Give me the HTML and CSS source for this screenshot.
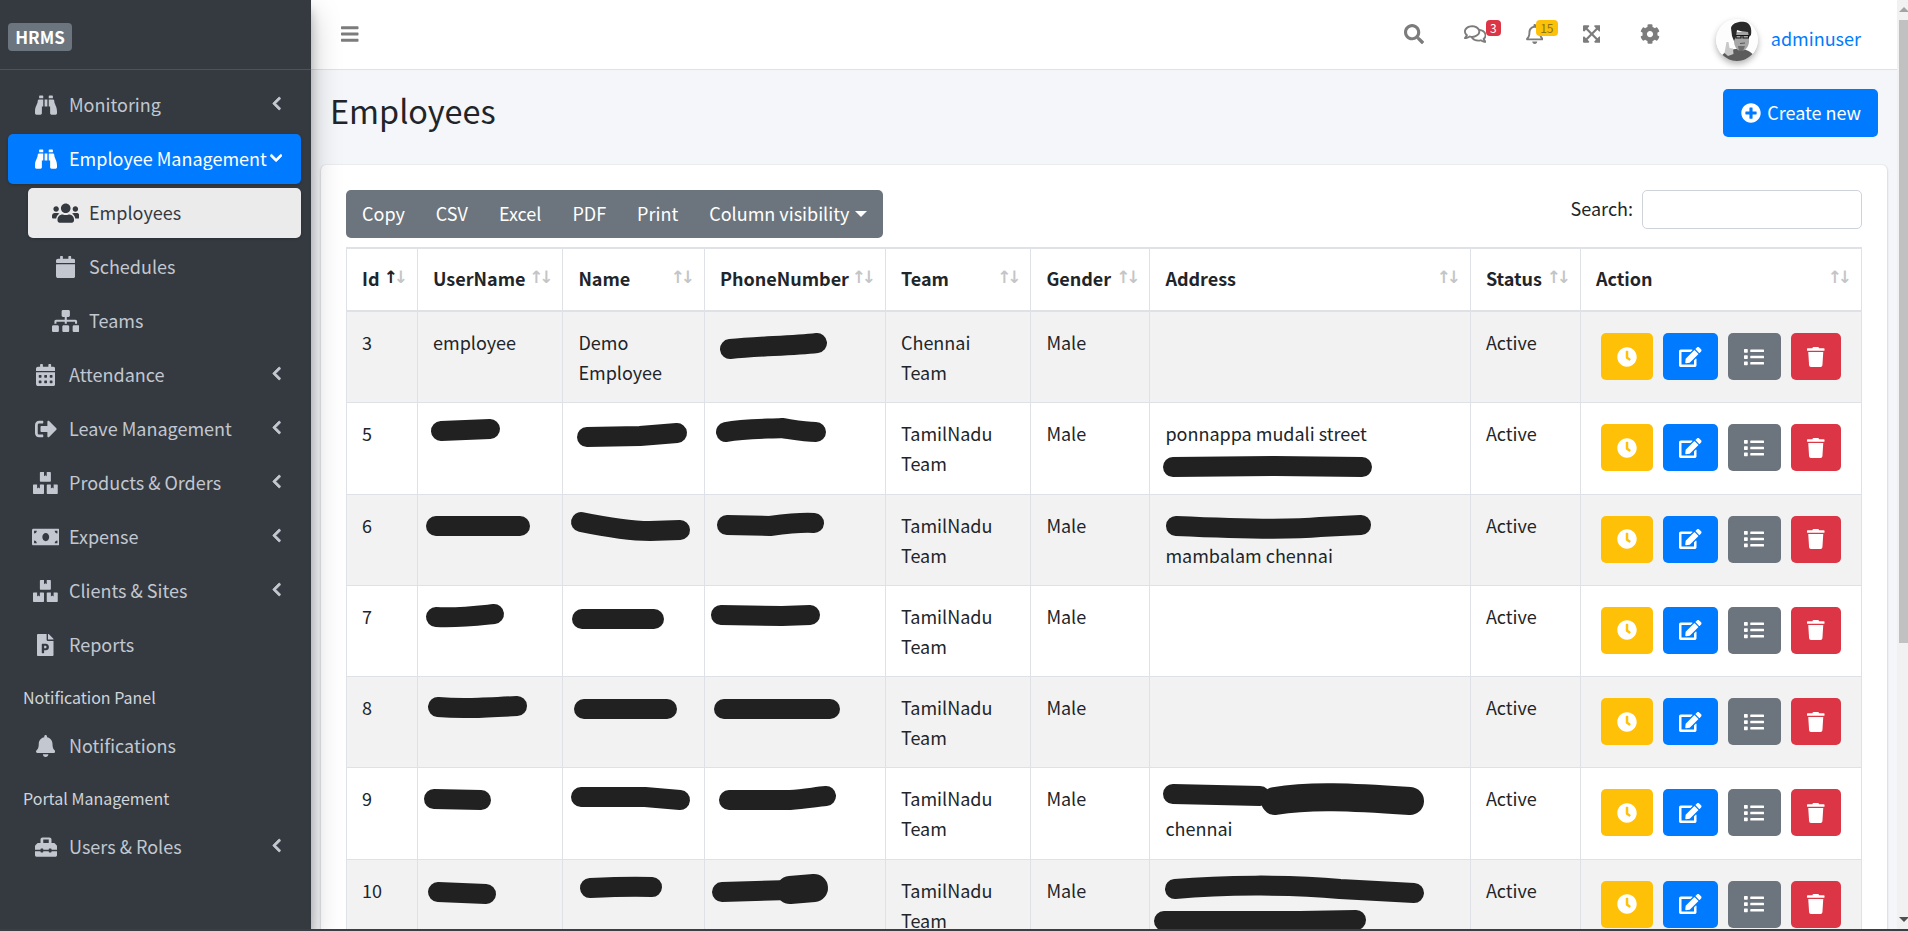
FILE: index.html
```
<!DOCTYPE html>
<html lang="en">
<head>
<meta charset="utf-8">
<title>Employees</title>
<link rel="stylesheet" href="styles.css">
</head>
<body>
<svg class="sprite" aria-hidden="true"><defs>
<path id="i-bars" d="M16 132h416c8.837 0 16-7.163 16-16V76c0-8.837-7.163-16-16-16H16C7.163 60 0 67.163 0 76v40c0 8.837 7.163 16 16 16zm0 160h416c8.837 0 16-7.163 16-16v-40c0-8.837-7.163-16-16-16H16c-8.837 0-16 7.163-16 16v40c0 8.837 7.163 16 16 16zm0 160h416c8.837 0 16-7.163 16-16v-40c0-8.837-7.163-16-16-16H16c-8.837 0-16 7.163-16 16v40c0 8.837 7.163 16 16 16z"/>
<path id="i-search" d="M505 442.7L405.3 343c-4.5-4.5-10.6-7-17-7H372c27.6-35.3 44-79.7 44-128C416 93.1 322.9 0 208 0S0 93.1 0 208s93.1 208 208 208c48.3 0 92.7-16.4 128-44v16.3c0 6.4 2.5 12.5 7 17l99.7 99.7c9.4 9.4 24.6 9.4 33.9 0l28.3-28.3c9.4-9.4 9.4-24.6.1-34zM208 336c-70.7 0-128-57.2-128-128 0-70.7 57.2-128 128-128 70.7 0 128 57.2 128 128 0 70.7-57.2 128-128 128z"/>
<path id="i-cog" d="M487.4 315.7l-42.6-24.6c4.3-23.2 4.3-47 0-70.2l42.6-24.6c4.9-2.8 7.1-8.6 5.5-14-11.1-35.6-30-67.8-54.7-94.6-3.8-4.1-10-5.1-14.8-2.3L380.8 110c-17.9-15.4-38.5-27.3-60.8-35.1V25.8c0-5.6-3.9-10.5-9.4-11.7-36.7-8.2-74.3-7.8-109.2 0-5.5 1.2-9.4 6.1-9.4 11.7V75c-22.2 7.9-42.8 19.8-60.8 35.1L88.7 85.5c-4.9-2.8-11-1.9-14.8 2.3-24.7 26.7-43.6 58.9-54.7 94.6-1.7 5.4.6 11.2 5.5 14L67.3 221c-4.3 23.2-4.3 47 0 70.2l-42.6 24.6c-4.9 2.8-7.1 8.6-5.5 14 11.1 35.6 30 67.8 54.7 94.6 3.8 4.1 10 5.1 14.8 2.3l42.6-24.6c17.9 15.4 38.5 27.3 60.8 35.1v49.2c0 5.6 3.9 10.5 9.4 11.7 36.7 8.2 74.3 7.8 109.2 0 5.5-1.2 9.4-6.1 9.4-11.7v-49.2c22.2-7.9 42.8-19.8 60.8-35.1l42.6 24.6c4.9 2.8 11 1.9 14.8-2.3 24.7-26.7 43.6-58.9 54.7-94.6 1.5-5.5-.7-11.3-5.6-14.1zM256 336c-44.1 0-80-35.9-80-80s35.9-80 80-80 80 35.9 80 80-35.9 80-80 80z"/>
<path id="i-left" d="M34.52 239.03L228.87 44.69c9.37-9.37 24.57-9.37 33.94 0l22.67 22.67c9.36 9.36 9.37 24.52.04 33.9L131.49 256l154.02 154.75c9.34 9.38 9.32 24.54-.04 33.9l-22.67 22.67c-9.37 9.37-24.57 9.37-33.94 0L34.52 272.97c-9.37-9.37-9.37-24.57 0-33.94z"/>
<path id="i-down" d="M207.029 381.476L12.686 187.132c-9.373-9.373-9.373-24.569 0-33.941l22.667-22.667c9.357-9.357 24.522-9.375 33.901-.04L224 284.505l154.745-154.021c9.379-9.335 24.544-9.317 33.901.04l22.667 22.667c9.373 9.373 9.373 24.569 0 33.941L240.971 381.476c-9.373 9.372-24.569 9.372-33.942 0z"/>
<path id="i-trash" d="M432 32H312l-9.4-18.7A24 24 0 0 0 281.1 0H166.8a23.72 23.72 0 0 0-21.4 13.3L136 32H16A16 16 0 0 0 0 48v32a16 16 0 0 0 16 16h416a16 16 0 0 0 16-16V48a16 16 0 0 0-16-16zM53.2 467a48 48 0 0 0 47.9 45h245.8a48 48 0 0 0 47.9-45L416 128H32z"/>
<path id="i-clock" d="M256,8C119,8,8,119,8,256S119,504,256,504,504,393,504,256,393,8,256,8Zm92.49,313h0l-20,25a16,16,0,0,1-22.49,2.5h0l-67-49.72a40,40,0,0,1-15-31.23V112a16,16,0,0,1,16-16h32a16,16,0,0,1,16,16V256l58,42.5A16,16,0,0,1,348.49,321Z"/>
<path id="i-edit" d="M402.6 83.2l90.2 90.2c3.8 3.8 3.8 10 0 13.8L274.4 405.6l-92.8 10.3c-12.4 1.4-22.9-9.1-21.5-21.5l10.3-92.8L388.8 83.2c3.8-3.8 10-3.8 13.8 0zm162-22.9l-48.8-48.8c-15.2-15.2-39.9-15.2-55.2 0l-35.4 35.4c-3.8 3.8-3.8 10 0 13.8l90.2 90.2c3.8 3.8 10 3.8 13.8 0l35.4-35.4c15.2-15.3 15.2-40 0-55.2zM384 346.2V448H64V128h229.8c3.2 0 6.2-1.3 8.5-3.5l40-40c7.6-7.6 2.2-20.5-8.5-20.5H48C21.5 64 0 85.5 0 112v352c0 26.5 21.5 48 48 48h352c26.5 0 48-21.5 48-48V306.2c0-10.7-12.9-16-20.5-8.5l-40 40c-2.2 2.3-3.5 5.3-3.5 8.5z"/>
<path id="i-list" d="M80 368H16a16 16 0 0 0-16 16v64a16 16 0 0 0 16 16h64a16 16 0 0 0 16-16v-64a16 16 0 0 0-16-16zm0-320H16A16 16 0 0 0 0 64v64a16 16 0 0 0 16 16h64a16 16 0 0 0 16-16V64a16 16 0 0 0-16-16zm0 160H16a16 16 0 0 0-16 16v64a16 16 0 0 0 16 16h64a16 16 0 0 0 16-16v-64a16 16 0 0 0-16-16zm416 176H176a16 16 0 0 0-16 16v32a16 16 0 0 0 16 16h320a16 16 0 0 0 16-16v-32a16 16 0 0 0-16-16zm0-320H176a16 16 0 0 0-16 16v32a16 16 0 0 0 16 16h320a16 16 0 0 0 16-16V80a16 16 0 0 0-16-16zm0 160H176a16 16 0 0 0-16 16v32a16 16 0 0 0 16 16h320a16 16 0 0 0 16-16v-32a16 16 0 0 0-16-16z"/>
<path id="i-plus" d="M256 8C119 8 8 119 8 256s111 248 248 248 248-111 248-248S393 8 256 8zm144 276c0 6.6-5.4 12-12 12h-92v92c0 6.6-5.4 12-12 12h-56c-6.6 0-12-5.4-12-12v-92h-92c-6.6 0-12-5.4-12-12v-56c0-6.6 5.4-12 12-12h92v-92c0-6.6 5.4-12 12-12h56c6.6 0 12 5.4 12 12v92h92c6.6 0 12 5.4 12 12v56z"/>
<path id="i-bell" d="M224 512c35.32 0 63.97-28.65 63.97-64H160.03c0 35.35 28.65 64 63.97 64zm215.39-149.71c-19.32-20.76-55.47-51.99-55.47-154.29 0-77.7-54.48-139.9-127.94-155.16V32c0-17.67-14.32-32-31.98-32s-31.98 14.33-31.98 32v20.84C118.56 68.1 64.08 130.3 64.08 208c0 102.3-36.15 133.53-55.47 154.29-6 6.45-8.66 14.16-8.61 21.71.11 16.4 12.98 32 32.1 32h383.8c19.12 0 32-15.6 32.1-32 .05-7.55-2.61-15.27-8.61-21.71z"/>
<path id="i-bell-o" d="M439.39 362.29c-19.32-20.76-55.47-51.99-55.47-154.29 0-77.7-54.48-139.9-127.94-155.16V32c0-17.67-14.32-32-31.98-32s-31.98 14.33-31.98 32v20.84C118.56 68.1 64.08 130.3 64.08 208c0 102.3-36.15 133.53-55.47 154.29-6 6.45-8.66 14.16-8.61 21.71.11 16.4 12.98 32 32.1 32h383.8c19.12 0 32-15.6 32.1-32 .05-7.55-2.61-15.27-8.61-21.71zM67.53 368c21.22-27.97 44.42-74.33 44.53-159.42 0-.2-.06-.38-.06-.58 0-61.86 50.14-112 112-112s112 50.14 112 112c0 .2-.06.38-.06.58.11 85.1 23.31 131.46 44.53 159.42H67.53zM224 512c35.32 0 63.97-28.65 63.97-64H160.03c0 35.35 28.65 64 63.97 64z"/>
<path id="i-users" d="M96 224c35.3 0 64-28.7 64-64s-28.7-64-64-64-64 28.7-64 64 28.7 64 64 64zm448 0c35.3 0 64-28.7 64-64s-28.7-64-64-64-64 28.7-64 64 28.7 64 64 64zm32 32h-64c-17.6 0-33.5 7.1-45.1 18.6 40.3 22.1 68.9 62 75.1 109.4h66c17.7 0 32-14.3 32-32v-32c0-35.3-28.7-64-64-64zm-256 0c61.9 0 112-50.1 112-112S381.9 32 320 32 208 82.1 208 144s50.1 112 112 112zm76.8 32h-8.3c-20.8 10-43.9 16-68.5 16s-47.6-6-68.5-16h-8.3C179.6 288 128 339.6 128 403.2V432c0 26.5 21.5 48 48 48h288c26.5 0 48-21.5 48-48v-28.8c0-63.6-51.6-115.2-115.2-115.2zm-223.7-13.4C161.5 263.1 145.6 256 128 256H64c-35.3 0-64 28.7-64 64v32c0 17.7 14.3 32 32 32h65.9c6.3-47.4 34.9-87.3 75.2-109.4z"/>
<path id="i-calendar" d="M12 192h424c6.6 0 12 5.4 12 12v260c0 26.5-21.5 48-48 48H48c-26.5 0-48-21.5-48-48V204c0-6.6 5.4-12 12-12zm436-44v-36c0-26.5-21.5-48-48-48h-48V12c0-6.6-5.4-12-12-12h-40c-6.6 0-12 5.4-12 12v52H160V12c0-6.6-5.4-12-12-12h-40c-6.6 0-12 5.4-12 12v52H48C21.5 64 0 85.5 0 112v36c0 6.6 5.4 12 12 12h424c6.6 0 12-5.4 12-12z"/>
<path id="i-calendar-alt" d="M0 464c0 26.5 21.5 48 48 48h352c26.5 0 48-21.5 48-48V192H0v272zm320-196c0-6.6 5.4-12 12-12h40c6.6 0 12 5.4 12 12v40c0 6.6-5.4 12-12 12h-40c-6.6 0-12-5.4-12-12v-40zm0 128c0-6.6 5.4-12 12-12h40c6.6 0 12 5.4 12 12v40c0 6.6-5.4 12-12 12h-40c-6.6 0-12-5.4-12-12v-40zM192 268c0-6.6 5.4-12 12-12h40c6.6 0 12 5.4 12 12v40c0 6.6-5.4 12-12 12h-40c-6.6 0-12-5.4-12-12v-40zm0 128c0-6.6 5.4-12 12-12h40c6.6 0 12 5.4 12 12v40c0 6.6-5.4 12-12 12h-40c-6.6 0-12-5.4-12-12v-40zM64 268c0-6.6 5.4-12 12-12h40c6.6 0 12 5.4 12 12v40c0 6.6-5.4 12-12 12H76c-6.6 0-12-5.4-12-12v-40zm0 128c0-6.6 5.4-12 12-12h40c6.6 0 12 5.4 12 12v40c0 6.6-5.4 12-12 12H76c-6.6 0-12-5.4-12-12v-40zM400 64h-48V16c0-8.8-7.2-16-16-16h-32c-8.8 0-16 7.2-16 16v48H160V16c0-8.8-7.2-16-16-16h-32c-8.8 0-16 7.2-16 16v48H48C21.5 64 0 85.5 0 112v48h448v-48c0-26.5-21.5-48-48-48z"/>
<path id="i-sitemap" d="M128 352H32c-17.67 0-32 14.33-32 32v96c0 17.67 14.33 32 32 32h96c17.67 0 32-14.33 32-32v-96c0-17.67-14.33-32-32-32zm240 0h-96c-17.67 0-32 14.33-32 32v96c0 17.67 14.33 32 32 32h96c17.67 0 32-14.33 32-32v-96c0-17.67-14.33-32-32-32zm240 0h-96c-17.67 0-32 14.33-32 32v96c0 17.67 14.33 32 32 32h96c17.67 0 32-14.33 32-32v-96c0-17.67-14.33-32-32-32zM104 272h192v48h48v-48h192v48h48v-57.6c0-21.18-17.22-38.4-38.4-38.4H344v-64h40c17.67 0 32-14.33 32-32V32c0-17.67-14.33-32-32-32H256c-17.67 0-32 14.33-32 32v96c0 17.67 14.33 32 32 32h40v64H94.4C73.22 224 56 241.22 56 262.4V320h48v-48z"/>
<path id="i-binoculars" d="M416 48c0-8.84-7.16-16-16-16h-64c-8.84 0-16 7.16-16 16v48h96V48zM63.91 159.99C61.4 253.84 3.46 274.22 0 404v44c0 17.67 14.33 32 32 32h96c17.67 0 32-14.33 32-32V288h32V128H95.84c-17.63 0-31.45 14.37-31.93 31.99zm384.18 0c-.48-17.62-14.3-31.99-31.93-31.99H320v160h32v160c0 17.67 14.33 32 32 32h96c17.67 0 32-14.33 32-32v-44c-3.46-129.78-61.4-150.16-63.91-244.01zM176 32h-64c-8.84 0-16 7.16-16 16v48h96V48c0-8.84-7.16-16-16-16zm48 256h64V128h-64v160z"/>
<path id="i-signout" d="M497 273L329 441c-15 15-41 4.5-41-17v-96H152c-13.3 0-24-10.7-24-24v-96c0-13.3 10.7-24 24-24h136V88c0-21.4 25.9-32 41-17l168 168c9.3 9.4 9.3 24.6 0 34zM192 436v-40c0-6.6-5.4-12-12-12H96c-17.7 0-32-14.3-32-32V160c0-17.7 14.3-32 32-32h84c6.6 0 12-5.4 12-12V76c0-6.6-5.4-12-12-12H96c-53 0-96 43-96 96v192c0 53 43 96 96 96h84c6.6 0 12-5.4 12-12z"/>
<path id="i-boxes" d="M560 288h-80v96l-32-21.3-32 21.3v-96h-80c-8.8 0-16 7.2-16 16v192c0 8.8 7.2 16 16 16h224c8.8 0 16-7.2 16-16V304c0-8.8-7.2-16-16-16zm-384-64h224c8.8 0 16-7.2 16-16V16c0-8.8-7.2-16-16-16h-80v96l-32-21.3L256 96V0h-80c-8.8 0-16 7.2-16 16v192c0 8.8 7.2 16 16 16zm64 64h-80v96l-32-21.3L96 384v-96H16c-8.8 0-16 7.2-16 16v192c0 8.8 7.2 16 16 16h224c8.8 0 16-7.2 16-16V304c0-8.8-7.2-16-16-16z"/>
<path id="i-money" d="M608 64H32C14.33 64 0 78.33 0 96v320c0 17.67 14.33 32 32 32h576c17.67 0 32-14.33 32-32V96c0-17.67-14.33-32-32-32zM48 400v-64c35.35 0 64 28.65 64 64H48zm0-224v-64h64c0 35.35-28.65 64-64 64zm272 176c-44.19 0-80-42.99-80-96 0-53.02 35.82-96 80-96s80 42.98 80 96c0 53.03-35.83 96-80 96zm272 48h-64c0-35.35 28.65-64 64-64v64zm0-224c-35.35 0-64-28.65-64-64h64v64z"/>
<path id="i-filep" d="M193.7 271.2c8.8 0 15.5 2.7 20.3 8.1 9.6 10.9 9.8 32.7-.2 44.1-4.9 5.6-11.9 8.5-21.1 8.5h-26.9v-60.7h27.9zM377 105L279 7c-4.5-4.5-10.6-7-17-7h-6v128h128v-6.1c0-6.3-2.5-12.4-7-16.9zm-153 31V0H24C10.7 0 0 10.7 0 24v464c0 13.3 10.7 24 24 24h336c13.3 0 24-10.7 24-24V160H248c-13.2 0-24-10.8-24-24zm53 165.2c0 90.3-88.8 77.6-111.1 77.6V436c0 6.6-5.4 12-12 12h-30.8c-6.6 0-12-5.4-12-12V236.2c0-6.6 5.4-12 12-12h81c44.5 0 72.9 32.8 72.9 77z"/>
<path id="i-toolbox" d="M502.63 214.63l-45.25-45.25c-6-6-14.14-9.37-22.63-9.37H384V80c0-26.51-21.49-48-48-48H176c-26.51 0-48 21.49-48 48v80H77.25c-8.49 0-16.62 3.37-22.63 9.37L9.37 214.63c-6 6-9.37 14.14-9.37 22.63V320h128v-16c0-8.84 7.16-16 16-16h32c8.84 0 16 7.16 16 16v16h128v-16c0-8.84 7.16-16 16-16h32c8.84 0 16 7.16 16 16v16h128v-82.75c0-8.48-3.37-16.62-9.37-22.62zM320 160H192V80h128v80zm64 208c0 8.84-7.16 16-16 16h-32c-8.84 0-16-7.16-16-16v-16H192v16c0 8.84-7.16 16-16 16h-32c-8.84 0-16-7.16-16-16v-16H0v96c0 17.67 14.33 32 32 32h448c17.67 0 32-14.33 32-32v-96H384v16z"/>
<path id="i-expand" d="M448 344v112a23.94 23.94 0 0 1-24 24H312c-21.39 0-32.09-25.9-17-41l36.2-36.2L224 295.6 116.77 402.9 153 439c15.09 15.1 4.39 41-17 41H24a23.94 23.94 0 0 1-24-24V344c0-21.4 25.89-32.1 41-17l36.19 36.2L184.46 256 77.18 148.7 41 185c-15.1 15.1-41 4.4-41-17V56a23.94 23.94 0 0 1 24-24h112c21.39 0 32.09 25.9 17 41l-36.2 36.2L224 216.4l107.23-107.3L295 73c-15.09-15.1-4.39-41 17-41h112a23.94 23.94 0 0 1 24 24v112c0 21.4-25.89 32.1-41 17l-36.19-36.2L263.54 256l107.28 107.3L407 327.1c15.1-15.2 41-4.5 41 16.9z"/>
<path id="i-comments" d="M532 386.2c27.5-27.1 44-61.1 44-98.2 0-80-76.5-146.1-176.2-157.9C368.3 72.5 294.3 32 208 32 93.1 32 0 103.6 0 192c0 37 16.5 71 44 98.2-15.3 30.7-37.3 54.5-37.7 54.9-6.3 6.7-8.1 16.5-4.4 25 3.6 8.5 12 14 21.2 14 53.5 0 96.7-20.2 125.2-38.8 9.2 2.1 18.7 3.7 28.4 4.9C208.1 407.6 281.8 448 368 448c20.8 0 40.8-2.4 59.8-6.8C456.3 459.7 499.4 480 553 480c9.2 0 17.5-5.5 21.2-14 3.6-8.5 1.9-18.3-4.4-25-.4-.3-22.5-24.1-37.8-54.8zm-392.8-92.3L122.1 305c-14.1 9.1-28.5 16.3-43.1 21.4 2.7-4.7 5.4-9.7 8-14.8l15.5-31.1L77.7 256C64.2 242.6 48 220.7 48 192c0-60.7 73.3-112 160-112s160 51.3 160 112-73.3 112-160 112c-16.5 0-33-1.9-49-5.6l-19.8-4.5zM498.3 352l-24.7 24.4 15.5 31.1c2.6 5.1 5.3 10.1 8 14.8-14.6-5.1-29-12.3-43.1-21.4l-17.1-11.1-19.9 4.6c-16 3.7-32.5 5.6-49 5.6-54 0-102.2-20.1-131.3-49.7C338 339.5 416 272.9 416 192c0-3.4-.4-6.7-.7-10C479.7 196.5 528 238.8 528 288c0 28.7-16.2 50.6-29.7 64z"/>
</defs></svg>

<div class="app">
  <aside class="sidebar">
    <div class="brand"><span class="brand-badge">HRMS</span></div>
    <nav class="nav">
      <a class="nav-link"><span class="nav-ic"><svg class="ic" viewBox="0 0 512 512"><use href="#i-binoculars"/></svg></span><span>Monitoring</span><svg class="chev" viewBox="0 0 320 512"><use href="#i-left"/></svg></a>
      <a class="nav-link active"><span class="nav-ic"><svg class="ic" viewBox="0 0 512 512"><use href="#i-binoculars"/></svg></span><span>Employee Management</span><svg class="chev-down" viewBox="0 0 448 512"><use href="#i-down"/></svg></a>
      <a class="nav-link sub current"><span class="nav-ic"><svg class="ic" viewBox="0 0 640 512"><use href="#i-users"/></svg></span><span>Employees</span></a>
      <a class="nav-link sub"><span class="nav-ic"><svg class="ic" viewBox="0 0 448 512"><use href="#i-calendar"/></svg></span><span>Schedules</span></a>
      <a class="nav-link sub"><span class="nav-ic"><svg class="ic" viewBox="0 0 640 512"><use href="#i-sitemap"/></svg></span><span>Teams</span></a>
      <a class="nav-link"><span class="nav-ic"><svg class="ic" viewBox="0 0 448 512"><use href="#i-calendar-alt"/></svg></span><span>Attendance</span><svg class="chev" viewBox="0 0 320 512"><use href="#i-left"/></svg></a>
      <a class="nav-link"><span class="nav-ic"><svg class="ic" viewBox="0 0 512 512"><use href="#i-signout"/></svg></span><span>Leave Management</span><svg class="chev" viewBox="0 0 320 512"><use href="#i-left"/></svg></a>
      <a class="nav-link"><span class="nav-ic"><svg class="ic" viewBox="0 0 576 512"><use href="#i-boxes"/></svg></span><span>Products &amp; Orders</span><svg class="chev" viewBox="0 0 320 512"><use href="#i-left"/></svg></a>
      <a class="nav-link"><span class="nav-ic"><svg class="ic" viewBox="0 0 640 512"><use href="#i-money"/></svg></span><span>Expense</span><svg class="chev" viewBox="0 0 320 512"><use href="#i-left"/></svg></a>
      <a class="nav-link"><span class="nav-ic"><svg class="ic" viewBox="0 0 576 512"><use href="#i-boxes"/></svg></span><span>Clients &amp; Sites</span><svg class="chev" viewBox="0 0 320 512"><use href="#i-left"/></svg></a>
      <a class="nav-link"><span class="nav-ic"><svg class="ic" viewBox="0 0 384 512"><use href="#i-filep"/></svg></span><span>Reports</span></a>
      <div class="nav-label">Notification Panel</div>
      <a class="nav-link"><span class="nav-ic"><svg class="ic" viewBox="0 0 448 512"><use href="#i-bell"/></svg></span><span>Notifications</span></a>
      <div class="nav-label">Portal Management</div>
      <a class="nav-link"><span class="nav-ic"><svg class="ic" viewBox="0 0 512 512"><use href="#i-toolbox"/></svg></span><span>Users &amp; Roles</span><svg class="chev" viewBox="0 0 320 512"><use href="#i-left"/></svg></a>
    </nav>
  </aside>

  <div class="main">
    <header class="topbar">
      <svg class="tb-ic burger" viewBox="0 0 448 512"><use href="#i-bars"/></svg>
      <div class="topbar-right">
        <svg class="tb-ic" viewBox="0 0 512 512"><use href="#i-search"/></svg>
        <span class="tb-item"><svg class="tb-ic" viewBox="0 0 576 512"><use href="#i-comments"/></svg><span class="badge badge-red">3</span></span>
        <span class="tb-item"><svg class="tb-ic" viewBox="0 0 448 512"><use href="#i-bell-o"/></svg><span class="badge badge-yellow">15</span></span>
        <svg class="tb-ic" viewBox="0 0 448 512"><use href="#i-expand"/></svg>
        <svg class="tb-ic gear" viewBox="0 0 512 512"><use href="#i-cog"/></svg>
        <svg class="avatar" viewBox="0 0 42 42">
          <circle cx="21" cy="21" r="21" fill="#fdfdfd"/>
          <path d="M3 40C7 33 14 31 19 30L27 30C32 31 37 34 39 39L30 42L12 42Z" fill="#5c5c5c"/>
          <path d="M18 13L33 13L33 22C33 28 29 32 25 32C21 32 18 27 18 22Z" fill="#a6a6a6"/>
          <path d="M22 27L29 27L27 32L23 32Z" fill="#6e6e6e"/>
          <path d="M15 9C16 4 23 2 29 3C34 4 36 9 35 16L33 18L32 13C28 13 24 12 21 11L20 17L18 22L16 17Z" fill="#2a2a2a"/>
          <path d="M19.5 16.5H25M27 16.5H33M25 16.5H27M20 16.5V19H25V16.5M27 16.5V19H32.5V16.5" fill="none" stroke="#151515" stroke-width="1.1"/>
          <path d="M10.5 23L12.5 23L13.5 29L17 29.5L17.5 35L12 37L8.5 34Z" fill="#c8c8c8"/>
          <path d="M24 24.5L29 24" stroke="#555" stroke-width="1" fill="none"/>
        </svg>
        <a class="user-name">adminuser</a>
      </div>
    </header>

    <div class="page">
      <div class="page-head">
        <h1 class="page-title">Employees</h1>
        <a class="btn-create"><svg class="create-ic" viewBox="0 0 512 512"><use href="#i-plus"/></svg>Create new</a>
      </div>

      <section class="card">
        <div class="tools">
          <div class="btn-group">
            <span class="tool">Copy</span><span class="tool">CSV</span><span class="tool">Excel</span><span class="tool">PDF</span><span class="tool">Print</span><span class="tool tool-caret">Column visibility</span>
          </div>
          <label class="search-wrap"><span class="search-label">Search:</span><input class="search-input" type="search" aria-label="Search"></label>
        </div>

        <table class="grid">
          <colgroup><col class="c1"><col class="c2"><col class="c3"><col class="c4"><col class="c5"><col class="c6"><col class="c7"><col class="c8"><col class="c9"></colgroup>
          <thead><tr>
            <th class="sorted">Id</th><th>UserName</th><th>Name</th><th>PhoneNumber</th><th>Team</th><th>Gender</th><th>Address</th><th>Status</th><th>Action</th>
          </tr></thead>
          <tbody>
            <tr><td>3</td><td>employee</td><td>Demo Employee</td><td></td><td>Chennai Team</td><td>Male</td><td></td><td>Active</td><td><div class="actions"><a class="act a-y"><svg class="act-ic" viewBox="0 0 512 512"><use href="#i-clock"/></svg></a><a class="act a-b"><svg class="act-ic" viewBox="0 0 576 512"><use href="#i-edit"/></svg></a><a class="act a-g"><svg class="act-ic" viewBox="0 0 512 512"><use href="#i-list"/></svg></a><a class="act a-r"><svg class="act-ic" viewBox="0 0 448 512"><use href="#i-trash"/></svg></a></div></td></tr>
            <tr><td>5</td><td></td><td></td><td></td><td>TamilNadu Team</td><td>Male</td><td>ponnappa mudali street</td><td>Active</td><td><div class="actions"><a class="act a-y"><svg class="act-ic" viewBox="0 0 512 512"><use href="#i-clock"/></svg></a><a class="act a-b"><svg class="act-ic" viewBox="0 0 576 512"><use href="#i-edit"/></svg></a><a class="act a-g"><svg class="act-ic" viewBox="0 0 512 512"><use href="#i-list"/></svg></a><a class="act a-r"><svg class="act-ic" viewBox="0 0 448 512"><use href="#i-trash"/></svg></a></div></td></tr>
            <tr><td>6</td><td></td><td></td><td></td><td>TamilNadu Team</td><td>Male</td><td><br>mambalam chennai</td><td>Active</td><td><div class="actions"><a class="act a-y"><svg class="act-ic" viewBox="0 0 512 512"><use href="#i-clock"/></svg></a><a class="act a-b"><svg class="act-ic" viewBox="0 0 576 512"><use href="#i-edit"/></svg></a><a class="act a-g"><svg class="act-ic" viewBox="0 0 512 512"><use href="#i-list"/></svg></a><a class="act a-r"><svg class="act-ic" viewBox="0 0 448 512"><use href="#i-trash"/></svg></a></div></td></tr>
            <tr><td>7</td><td></td><td></td><td></td><td>TamilNadu Team</td><td>Male</td><td></td><td>Active</td><td><div class="actions"><a class="act a-y"><svg class="act-ic" viewBox="0 0 512 512"><use href="#i-clock"/></svg></a><a class="act a-b"><svg class="act-ic" viewBox="0 0 576 512"><use href="#i-edit"/></svg></a><a class="act a-g"><svg class="act-ic" viewBox="0 0 512 512"><use href="#i-list"/></svg></a><a class="act a-r"><svg class="act-ic" viewBox="0 0 448 512"><use href="#i-trash"/></svg></a></div></td></tr>
            <tr><td>8</td><td></td><td></td><td></td><td>TamilNadu Team</td><td>Male</td><td></td><td>Active</td><td><div class="actions"><a class="act a-y"><svg class="act-ic" viewBox="0 0 512 512"><use href="#i-clock"/></svg></a><a class="act a-b"><svg class="act-ic" viewBox="0 0 576 512"><use href="#i-edit"/></svg></a><a class="act a-g"><svg class="act-ic" viewBox="0 0 512 512"><use href="#i-list"/></svg></a><a class="act a-r"><svg class="act-ic" viewBox="0 0 448 512"><use href="#i-trash"/></svg></a></div></td></tr>
            <tr><td>9</td><td></td><td></td><td></td><td>TamilNadu Team</td><td>Male</td><td><br>chennai</td><td>Active</td><td><div class="actions"><a class="act a-y"><svg class="act-ic" viewBox="0 0 512 512"><use href="#i-clock"/></svg></a><a class="act a-b"><svg class="act-ic" viewBox="0 0 576 512"><use href="#i-edit"/></svg></a><a class="act a-g"><svg class="act-ic" viewBox="0 0 512 512"><use href="#i-list"/></svg></a><a class="act a-r"><svg class="act-ic" viewBox="0 0 448 512"><use href="#i-trash"/></svg></a></div></td></tr>
            <tr><td>10</td><td></td><td></td><td></td><td>TamilNadu Team</td><td>Male</td><td></td><td>Active</td><td><div class="actions"><a class="act a-y"><svg class="act-ic" viewBox="0 0 512 512"><use href="#i-clock"/></svg></a><a class="act a-b"><svg class="act-ic" viewBox="0 0 576 512"><use href="#i-edit"/></svg></a><a class="act a-g"><svg class="act-ic" viewBox="0 0 512 512"><use href="#i-list"/></svg></a><a class="act a-r"><svg class="act-ic" viewBox="0 0 448 512"><use href="#i-trash"/></svg></a></div></td></tr>
          </tbody>
        </table>
      </section>
    </div>
  </div>

  <div class="scrollbar">
    <span class="sb-up"></span>
    <span class="sb-thumb"></span>
    <span class="sb-down"></span>
  </div>

  <svg class="redactions" viewBox="0 0 1908 929" aria-hidden="true">
    <path d="M730 349C760 346 790 346 817 343"/>
    <path d="M441 431L490 429"/>
    <path d="M587 437L640 436L677 433"/>
    <path d="M726 432C745 428 770 429 782 428C795 430 805 432 816 432"/>
    <path d="M1173 467L1275 466L1362 467"/>
    <path d="M436 526L520 526"/>
    <path d="M581 522C610 528 630 531 650 531L680 530"/>
    <path d="M727 525L770 526C785 524 800 522 814 523"/>
    <path d="M1176 526C1220 528 1290 530 1320 527L1361 525"/>
    <path d="M436 617C460 618 475 616 494 614"/>
    <path d="M582 619L654 619"/>
    <path d="M721 615L782 616L810 615"/>
    <path d="M438 707C460 709 480 708 517 706"/>
    <path d="M584 709L667 709"/>
    <path d="M724 709L830 709"/>
    <path d="M434 799L481 800"/>
    <path d="M581 797L645 797L680 800"/>
    <path d="M729 800L790 800C805 799 815 797 826 796"/>
    <path d="M1173 794L1260 796"/>
    <path class="thick" d="M1275 801C1310 795 1350 797 1410 801"/>
    <path d="M438 892L486 894"/>
    <path d="M590 888C610 887 630 886 652 887"/>
    <path d="M722 892L790 890"/>
    <path class="thick" d="M790 890L814 888"/>
    <path d="M1175 889C1220 885 1290 884 1340 889L1414 893"/>
    <path d="M1164 921L1300 921L1356 920"/>
  </svg>
</div>
</body>
</html>
```
FILE: styles.css
```
* { box-sizing: border-box; }
html, body { margin: 0; height: 100%; overflow: hidden; }
body {
  font-family: "Noto Sans CJK SC", "Noto Sans", sans-serif;
  font-size: 18px;
  line-height: 30px;
  color: #212529;
  background: #f4f6f9;
}
.sprite { position: absolute; width: 0; height: 0; }
.app {
  position: relative;
  display: flex;
  height: 931px;
  border-bottom: 2px solid #3b3f43;
  overflow: hidden;
}

/* Sidebar */
.sidebar {
  flex: 0 0 311px;
  min-width: 0;
  background: #343a40;
  box-shadow: 0 14px 28px rgba(0,0,0,.25), 0 10px 10px rgba(0,0,0,.22);
  position: relative;
  z-index: 5;
}
.brand {
  height: 70px;
  padding: 23px 0 0 8px;
  border-bottom: 1px solid #4b545c;
}
.brand-badge {
  display: block;
  width: 64px;
  height: 28px;
  line-height: 27px;
  background: #6c757d;
  border-radius: 4px;
  color: #fff;
  font-weight: 700;
  font-size: 17px;
  text-align: center;
}
.nav { padding: 10px 10px 0 8px; display: flex; flex-direction: column; }
.nav-link {
  display: flex;
  align-items: center;
  height: 50px;
  margin-bottom: 4px;
  padding: 0 20px;
  border-radius: 5px;
  color: #c2c7d0;
}
.nav-link > span:nth-child(2) { white-space: nowrap; padding-bottom: 2px; }
.nav-ic {
  flex: 0 0 35px;
  margin-right: 6px;
  display: flex;
  justify-content: center;
}
.ic { height: 22px; width: auto; fill: currentColor; display: block; }
.chev { margin-left: auto; height: 15px; width: 9.4px; fill: currentColor; stroke: currentColor; stroke-width: 24; margin-top: -3px; flex: none; }
.chev-down { margin-left: auto; margin-right: -1px; height: 14px; width: 12.25px; fill: currentColor; stroke: currentColor; stroke-width: 24; flex: none; margin-top: -2px; }
.nav-link.active {
  background: #007bff;
  color: #fff;
  box-shadow: 0 1px 3px rgba(0,0,0,.2);
}
.nav-link.sub { margin-left: 20px; }
.nav-link.current {
  background: rgba(255,255,255,.9);
  color: #343a40;
  box-shadow: 0 1px 3px rgba(0,0,0,.2);
}
.nav-label {
  height: 47px;
  padding: 8px 0 0 15px;
  color: #d0d4db;
  font-size: 16px;
  line-height: 30px;
}

/* Main column */
.main { flex: 1 1 auto; min-width: 0; display: flex; flex-direction: column; overflow: hidden; }
.topbar {
  flex: none;
  height: 70px;
  background: #fff;
  border-bottom: 1px solid #dee2e6;
  display: flex;
  align-items: flex-start;
  padding: 24px 36px 0 30px;
}
.tb-ic { height: 20px; width: auto; fill: #7c7c7c; display: block; }
.topbar-right { margin-left: auto; display: flex; align-items: flex-start; gap: 39.5px; }
.tb-item { position: relative; display: block; }
.gear { margin-right: 17px; }
.badge {
  position: absolute;
  top: -4px;
  height: 16px;
  border-radius: 4px;
  font-size: 12px;
  line-height: 16px;
  text-align: center;
}
.badge-red { left: 22px; width: 15px; background: #dc3545; color: #fff; }
.badge-yellow { left: 10px; width: 22px; background: #ffc107; color: #8a7417; }
.avatar {
  width: 42px;
  height: 42px;
  margin-top: -5px;
  margin-right: -27px;
  border-radius: 50%;
  box-shadow: 0 3px 6px rgba(0,0,0,.3);
  flex: none;
}
.user-name { color: #007bff; margin-top: -1px; }

.page { flex: 1; min-height: 0; padding: 0 10px; }
.page-head {
  display: flex;
  justify-content: space-between;
  align-items: flex-start;
  padding: 19px 9px 0 9px;
  height: 95px;
}
.page-title { margin: 0; font-size: 32.4px; line-height: 41px; font-weight: 400; }
.btn-create {
  display: flex;
  align-items: center;
  height: 48px;
  padding: 0 17px 2px 18px;
  background: #007bff;
  color: #fff;
  border-radius: 5px;
}
.create-ic { height: 20px; width: 20px; fill: #fff; margin-right: 6px; margin-top: 2px; }

.card {
  background: #fff;
  border-radius: 5px;
  box-shadow: 0 0 1px rgba(0,0,0,.125), 0 1px 3px rgba(0,0,0,.2);
  padding: 25px 25px 0;
}
.tools { display: flex; justify-content: space-between; align-items: flex-start; height: 57px; }
.btn-group {
  display: flex;
  height: 48px;
  align-items: center;
  background: #6c757d;
  border-radius: 5px;
  color: #fff;
  padding: 0 16px 2px 16px;
}
.tool { margin-right: 31px; }
.tool:last-child { margin-right: 0; }
.tool-caret::after {
  content: "";
  display: inline-block;
  margin-left: 6px;
  vertical-align: 4px;
  border-top: 6px solid #fff;
  border-left: 6px solid transparent;
  border-right: 6px solid transparent;
}
.search-wrap { display: flex; align-items: center; height: 39px; }
.search-label { padding-bottom: 4px; }
.search-input {
  width: 220px;
  height: 39px;
  margin-left: 9px;
  border: 1px solid #ced4da;
  border-radius: 5px;
  background: #fff;
}

/* Table */
.grid { width: 1515px; table-layout: fixed; border-collapse: separate; border-spacing: 0; border-top: 2px solid #dee2e6; border-left: 1px solid #dee2e6; }
.c1 { width: 71px; } .c2 { width: 145.4px; } .c3 { width: 141.6px; } .c4 { width: 181px; }
.c5 { width: 145.4px; } .c6 { width: 119px; } .c7 { width: 320.5px; } .c8 { width: 110px; } .c9 { width: 281px; }
.grid th, .grid td { border-right: 1px solid #dee2e6; text-align: left; vertical-align: top; }
.grid th {
  position: relative;
  padding: 14px 15px 17px;
  font-weight: 700;
  border-bottom: 2px solid #dee2e6;
}
.grid th::before, .grid th::after {
  position: absolute;
  top: 13px;
  font-family: "DejaVu Sans", sans-serif;
  font-weight: 700;
  font-size: 17px;
  opacity: .26;
}
.grid th::before { content: "\2191"; right: 19px; }
.grid th::after { content: "\2193"; right: 9px; }
.grid th.sorted::before { opacity: 1; color: #212529; }
.grid td { padding: 15px 15px 15.25px; border-bottom: 1px solid #dee2e6; }
.grid tbody tr:nth-child(odd) td { background: #f2f2f2; }

.actions { display: flex; gap: 10px; margin: 6px 0 0 5px; }
.act { display: flex; align-items: center; justify-content: center; height: 47px; border-radius: 5px; }
.act-ic { height: 20px; width: auto; fill: #fff; display: block; }
.a-y { width: 52px; background: #ffc107; }
.a-b { width: 55px; background: #007bff; }
.a-g { width: 53px; background: #6c757d; }
.a-r { width: 50px; background: #dc3545; }

/* Scrollbar */
.scrollbar { flex: 0 0 11px; background: #f1f1f1; position: relative; z-index: 6; padding-left: 2px; display: flex; flex-direction: column; align-items: flex-start; }
.sb-thumb { display: block; width: 9px; height: 623px; background: #c1c1c1; }
.sb-up { display: block; height: 20px; width: 9px; position: relative; }
.sb-up::after { content: ""; position: absolute; left: 0; top: 7px; border-bottom: 5px solid #a3a3a3; border-left: 5px solid transparent; border-right: 5px solid transparent; }
.sb-down { position: absolute; left: 2px; top: 917px; border-top: 5px solid #505050; border-left: 5px solid transparent; border-right: 5px solid transparent; }

/* Hand-drawn redaction strokes over the table */
.redactions { position: absolute; left: 0; top: 0; width: 1908px; height: 929px; z-index: 3; pointer-events: none; }
.redactions path { fill: none; stroke: #212121; stroke-width: 20; stroke-linecap: round; stroke-linejoin: round; }
.redactions path.thick { stroke-width: 28; }
```
